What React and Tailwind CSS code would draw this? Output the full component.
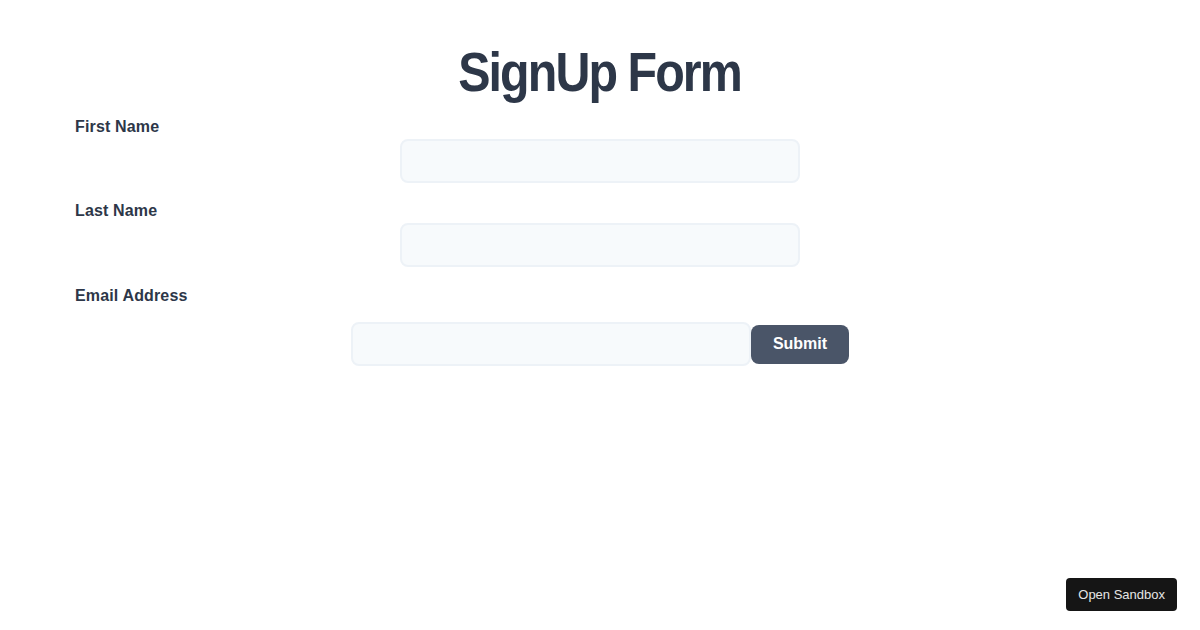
import React from 'react';

const Field = ({ label, id }) => (
  <div className="mb-4">
    <label htmlFor={id} className="block text-base leading-6 font-bold tracking-[0.15px] text-[#2d3748]">{label}</label>
    <input
      id={id}
      type="text"
      className="block mx-auto w-[400px] h-[44px] px-3 rounded-lg bg-[#f7fafc] border-2 border-[#edf2f7] outline-none"
    />
  </div>
);

export default function App() {
  return (
    <div className="min-h-screen bg-white font-['Liberation_Sans',Arial,sans-serif] text-[#2d3748]">
      <h1 className="pt-[45px] mb-[15px] text-center text-[55px] leading-[55px] font-bold text-[#2d3748]">
        <span className="inline-block scale-x-[0.88] tracking-[-2.2px]">SignUp Form</span>
      </h1>
      <form className="px-[75px]" onSubmit={(e) => e.preventDefault()}>
        <Field label="First Name" id="first" />
        <Field label="Last Name" id="last" />
        <label htmlFor="email" className="block pt-px text-base leading-6 font-bold tracking-[0.15px] text-[#2d3748]">Email Address</label>
        <div className="mt-[14px] flex items-center justify-center">
          <input
            id="email"
            type="email"
            className="w-[400px] h-[44px] px-3 rounded-lg bg-[#f7fafc] border-2 border-[#edf2f7] outline-none"
          />
          <button type="submit" className="h-[39px] px-[22px] rounded-lg bg-[#4a5568] text-white text-base font-bold">
            Submit
          </button>
        </div>
      </form>
      <button className="fixed right-[23px] bottom-[19px] h-[33px] px-3 rounded bg-[#151515] text-[13px] text-[#e5e5e5]">
        Open Sandbox
      </button>
    </div>
  );
}
